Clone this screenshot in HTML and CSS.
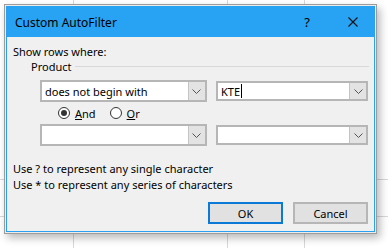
FILE: index.html
```html
<!DOCTYPE html>
<html lang="en">
<head>
    <meta charset="UTF-8">
    <title>Custom AutoFilter</title>
    <link rel="stylesheet" href="styles.css">
</head>
<body>

    <div class="sheet">
        <div class="dialog">
            <div class="frame">
                <!-- Title bar -->
                <div class="titlebar">
                    <span class="title">Custom AutoFilter</span>
                    <span class="help">?</span>
                    <span class="close">
                        <svg width="10" height="10" viewBox="0 0 10 10"><path d="M0.5 0.5 L9.5 9.5 M9.5 0.5 L0.5 9.5" stroke="#111" stroke-width="1.1" fill="none"/></svg>
                    </span>
                </div>

                <div class="content">
                    <div class="caption">Show rows where:</div>

                    <div class="group">
                        <div class="group-head">
                            <span>Product</span>
                            <span class="group-line"></span>
                        </div>

                        <!-- First criterion -->
                        <div class="criteria-row">
                            <div class="combo operator">
                                <span class="combo-text">does not begin with</span>
                                <span class="combo-btn"><svg width="9" height="5" viewBox="0 0 9 5"><path d="M0.5 0.5 L4.5 4.5 L8.5 0.5" stroke="#555" fill="none"/></svg></span>
                            </div>
                            <div class="combo value">
                                <span class="combo-text">KTE<span class="caret"></span></span>
                                <span class="combo-btn"><svg width="9" height="5" viewBox="0 0 9 5"><path d="M0.5 0.5 L4.5 4.5 L8.5 0.5" stroke="#555" fill="none"/></svg></span>
                            </div>
                        </div>

                        <!-- And / Or -->
                        <div class="radio-row">
                            <label class="radio"><span class="dot checked"></span><span><u>A</u>nd</span></label>
                            <label class="radio"><span class="dot"></span><span><u>O</u>r</span></label>
                        </div>

                        <!-- Second criterion -->
                        <div class="criteria-row second">
                            <div class="combo operator">
                                <span class="combo-text"></span>
                                <span class="combo-btn"><svg width="9" height="5" viewBox="0 0 9 5"><path d="M0.5 0.5 L4.5 4.5 L8.5 0.5" stroke="#555" fill="none"/></svg></span>
                            </div>
                            <div class="combo value">
                                <span class="combo-text"></span>
                                <span class="combo-btn"><svg width="9" height="5" viewBox="0 0 9 5"><path d="M0.5 0.5 L4.5 4.5 L8.5 0.5" stroke="#555" fill="none"/></svg></span>
                            </div>
                        </div>
                    </div>

                    <div class="hints">
                        <div>Use ? to represent any single character</div>
                        <div>Use * to represent any series of characters</div>
                    </div>

                    <div class="buttons">
                        <button class="btn default">OK</button>
                        <button class="btn">Cancel</button>
                    </div>
                </div>
            </div>
        </div>
    </div>

</body>
</html>
```

FILE: styles.css
```css
body {
    margin: 0;
    font-family: 'Noto Sans', 'Open Sans', sans-serif;
    font-size: 11px;
    color: #000;
}

/* Excel sheet behind the dialog */
.sheet {
    width: 388px;
    height: 248px;
    overflow: hidden;
    background-color: #fff;
    background-image:
        linear-gradient(to right, transparent 73px, #d8d8d8 73px, #d8d8d8 74px, transparent 74px),
        linear-gradient(to right, transparent 227px, #d8d8d8 227px, #d8d8d8 228px, transparent 228px),
        linear-gradient(to right, transparent 304px, #d8d8d8 304px, #d8d8d8 305px, transparent 305px),
        linear-gradient(to bottom, transparent 179px, #d8d8d8 179px, #d8d8d8 180px, transparent 180px),
        linear-gradient(to bottom, transparent 216px, #d8d8d8 216px, #d8d8d8 217px, transparent 217px);
    padding-top: 4px;
    padding-left: 4px;
    box-sizing: border-box;
}

.dialog {
    width: 373px;
    box-sizing: border-box;
    border: 1px solid #9c9c9c;
    padding: 1px;
    background-color: #ececec;
    box-shadow: 3px 4px 8px rgba(0, 0, 0, 0.28);
}

.frame {
    border: 1px solid #2aa0f0;
    background-color: #f0f0f0;
}

.titlebar {
    height: 30px;
    background-color: #28a2f2;
    display: flex;
    align-items: center;
    padding-left: 8px;
}

.title {
    flex: 1;
    font-size: 12px;
}

.help {
    width: 20px;
    font-size: 13px;
    text-align: center;
    margin-right: 31px;
}

.close {
    display: flex;
    width: 10px;
    margin-right: 16px;
}

.content {
    padding: 7px 6px 7px 6px;
}

.caption {
    line-height: 15px;
}

.group {
    margin-left: 18px;
}

.group-head {
    display: flex;
    align-items: center;
    line-height: 15px;
    margin-right: -1px;
}

.group-line {
    flex: 1;
    border-top: 1px solid #d8d8d8;
    margin-left: 4px;
}

.criteria-row {
    display: flex;
    align-items: center;
    gap: 9px;
    margin-top: 6px;
    padding-left: 9px;
}

.criteria-row.second {
    margin-top: 3px;
}

.combo {
    display: flex;
    box-sizing: border-box;
    border: 2px solid #b6b6b6;
    background-color: #fff;
}

.combo.operator {
    width: 168px;
    height: 22px;
}

.combo.value {
    width: 153px;
    height: 20px;
}

.combo-text {
    flex: 1;
    display: flex;
    align-items: center;
    padding-left: 3px;
    white-space: nowrap;
}

.combo-btn {
    width: 16px;
    display: flex;
    align-items: center;
    justify-content: center;
    background-color: #e3e3e3;
    border-left: 1px solid #c4c4c4;
}

.caret {
    display: inline-block;
    width: 1px;
    height: 14px;
    background-color: #000;
    margin-left: 1px;
}

.radio-row {
    display: flex;
    align-items: center;
    height: 16px;
    margin-top: 3px;
    padding-left: 27px;
    gap: 14px;
}

.radio {
    display: flex;
    align-items: center;
    gap: 5px;
}

.dot {
    width: 12px;
    height: 12px;
    box-sizing: border-box;
    border: 1px solid #333;
    border-radius: 50%;
    background-color: #fff;
    position: relative;
}

.dot.checked::after {
    content: "";
    position: absolute;
    left: 2px;
    top: 2px;
    width: 6px;
    height: 6px;
    border-radius: 50%;
    background-color: #333;
}

.hints {
    margin-top: 15px;
    line-height: 16px;
}

.buttons {
    display: flex;
    justify-content: flex-end;
    gap: 10px;
    margin-top: 9px;
}

.btn {
    width: 75px;
    height: 22px;
    box-sizing: border-box;
    border: 2px solid #b6b6b6;
    background-color: #e1e1e1;
    font-family: inherit;
    font-size: 11px;
    padding: 0;
}

.btn.default {
    border-color: #0a7ad6;
}
```
